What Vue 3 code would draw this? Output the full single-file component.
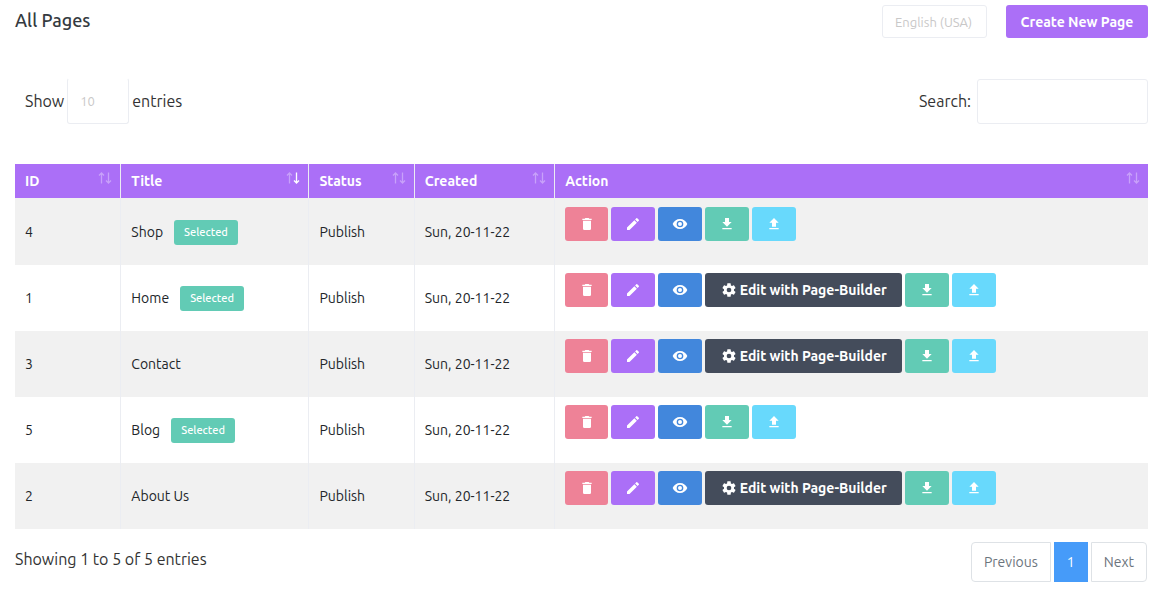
<template>
  <section class="pages">
    <header class="page-header">
      <h4>All Pages</h4>
      <div class="header-actions">
        <select v-model="language" class="field language" aria-label="Language">
          <option>English (USA)</option>
        </select>
        <button type="button" class="btn create">Create New Page</button>
      </div>
    </header>

    <div class="toolbar">
      <div class="control">
        <label for="length">Show</label>
        <select id="length" v-model="length" class="field length">
          <option>10</option>
          <option>25</option>
          <option>50</option>
        </select>
        <span>entries</span>
      </div>
      <div class="control search-control">
        <label for="search">Search:</label>
        <input id="search" v-model="search" type="search" class="field search" />
      </div>
    </div>

    <table>
      <thead>
        <tr>
          <th v-for="col in columns" :key="col.key" :class="'col-' + col.key" scope="col">
            <div class="th-inner">
              <span>{{ col.label }}</span>
              <svg class="sort" :class="{ sorted: col.key === 'title' }" viewBox="0 0 14 12" aria-hidden="true">
                <path d="M3.5 11.5V1M1 3.5L3.5 1L6 3.5" />
                <path class="down" d="M10.5 .5V11M8 8.5L10.5 11L13 8.5" />
              </svg>
            </div>
          </th>
        </tr>
      </thead>
      <tbody>
        <tr v-for="page in visiblePages" :key="page.id">
          <td>{{ page.id }}</td>
          <td>
            <div class="title">
              <span>{{ page.title }}</span>
              <span v-if="page.selected" class="badge">Selected</span>
            </div>
          </td>
          <td>{{ page.status }}</td>
          <td>{{ page.created }}</td>
          <td class="action-cell">
            <div class="actions">
              <template v-for="action in actions" :key="action.name">
                <a
                  v-if="action.name !== 'builder' || page.builder"
                  href="#"
                  class="btn"
                  :class="action.name"
                  :aria-label="action.label"
                  @click.prevent
                >
                  <svg viewBox="0 0 24 24" aria-hidden="true"><path :d="action.icon" /></svg>
                  <span v-if="action.name === 'builder'">{{ action.label }}</span>
                </a>
              </template>
            </div>
          </td>
        </tr>
      </tbody>
    </table>

    <footer class="table-footer">
      <div>Showing 1 to {{ visiblePages.length }} of {{ pages.length }} entries</div>
      <nav class="pagination" aria-label="Pagination">
        <a href="#" @click.prevent>Previous</a>
        <a href="#" class="current" aria-current="page" @click.prevent>1</a>
        <a href="#" @click.prevent>Next</a>
      </nav>
    </footer>
  </section>
</template>

<script setup>
import { ref, computed } from 'vue'

const language = ref('English (USA)')
const length = ref('10')
const search = ref('')

const columns = [
  { key: 'id', label: 'ID' },
  { key: 'title', label: 'Title' },
  { key: 'status', label: 'Status' },
  { key: 'created', label: 'Created' },
  { key: 'action', label: 'Action' }
]

const pages = [
  { id: 4, title: 'Shop', selected: true, builder: false, status: 'Publish', created: 'Sun, 20-11-22' },
  { id: 1, title: 'Home', selected: true, builder: true, status: 'Publish', created: 'Sun, 20-11-22' },
  { id: 3, title: 'Contact', selected: false, builder: true, status: 'Publish', created: 'Sun, 20-11-22' },
  { id: 5, title: 'Blog', selected: true, builder: false, status: 'Publish', created: 'Sun, 20-11-22' },
  { id: 2, title: 'About Us', selected: false, builder: true, status: 'Publish', created: 'Sun, 20-11-22' }
]

const actions = [
  {
    name: 'delete',
    label: 'Delete',
    icon: 'M6 19a2 2 0 0 0 2 2h8a2 2 0 0 0 2-2V7H6v12zM19 4h-3.5l-1-1h-5l-1 1H5v2h14V4z'
  },
  {
    name: 'edit',
    label: 'Edit',
    icon: 'M3 17.25V21h3.75L17.81 9.94l-3.75-3.75L3 17.25zM20.71 7.04a1 1 0 0 0 0-1.41l-2.34-2.34a1 1 0 0 0-1.41 0l-1.83 1.83 3.75 3.75 1.83-1.83z'
  },
  {
    name: 'view',
    label: 'View',
    icon: 'M12 4.5C7 4.5 2.73 7.61 1 12c1.73 4.39 6 7.5 11 7.5s9.27-3.11 11-7.5c-1.73-4.39-6-7.5-11-7.5zM12 17a5 5 0 1 1 0-10 5 5 0 0 1 0 10zm0-8a3 3 0 1 0 0 6 3 3 0 0 0 0-6z'
  },
  {
    name: 'builder',
    label: 'Edit with Page-Builder',
    icon: 'M12 15.5A3.5 3.5 0 0 1 8.5 12 3.5 3.5 0 0 1 12 8.5a3.5 3.5 0 0 1 3.5 3.5 3.5 3.5 0 0 1-3.5 3.5m7.43-2.53c.04-.32.07-.64.07-.97s-.03-.66-.07-1l2.11-1.63c.19-.15.24-.42.12-.64l-2-3.46c-.12-.22-.39-.31-.61-.22l-2.49 1c-.52-.39-1.06-.73-1.69-.98l-.37-2.65A.506.506 0 0 0 14 2h-4c-.25 0-.46.18-.5.42l-.37 2.65c-.63.25-1.17.59-1.69.98l-2.49-1c-.22-.09-.49 0-.61.22l-2 3.46c-.13.22-.07.49.12.64L4.57 11c-.04.34-.07.67-.07 1s.03.65.07.97l-2.11 1.66c-.19.15-.25.42-.12.64l2 3.46c.12.22.39.3.61.22l2.49-1.01c.52.4 1.06.74 1.69.99l.37 2.65c.04.24.25.42.5.42h4c.25 0 .46-.18.5-.42l.37-2.65c.63-.26 1.17-.59 1.69-.99l2.49 1.01c.22.08.49 0 .61-.22l2-3.46c.12-.22.07-.49-.12-.64l-2.11-1.66z'
  },
  { name: 'download', label: 'Download', icon: 'M19 9h-4V3H9v6H5l7 7 7-7zM5 18v2h14v-2H5z' },
  { name: 'upload', label: 'Upload', icon: 'M9 16h6v-6h4l-7-7-7 7h4v6zm-4 2h14v2H5v-2z' }
]

const visiblePages = computed(() =>
  pages
    .filter(p => p.title.toLowerCase().includes(search.value.toLowerCase()))
    .slice(0, Number(length.value))
)
</script>

<style>
body {
  margin: 0;
  background: #fff;
}
</style>

<style scoped>
* {
  box-sizing: border-box;
}

.pages {
  padding: 5px 10px 20px 15px;
  font-family: Ubuntu, 'Noto Sans', sans-serif;
  font-size: 16px;
  line-height: 24px;
  color: #333;
}

.page-header,
.header-actions,
.toolbar,
.control,
.table-footer,
.pagination {
  display: flex;
  align-items: center;
}

.page-header,
.toolbar,
.table-footer {
  justify-content: space-between;
}

.page-header {
  align-items: flex-start;
}

h4 {
  margin: 3px 0 0;
  font-size: 18px;
  font-weight: 500;
  line-height: 24px;
  color: #343a40;
}

.header-actions {
  gap: 19px;
}

.field {
  appearance: none;
  border: 1px solid #ebedf2;
  border-radius: 3px;
  background: #fff;
  font-family: inherit;
  font-size: 13px;
  color: #c9c8c8;
  outline: none;
}

.language {
  width: 105px;
  height: 33px;
  padding: 0 12px;
}

.btn {
  display: inline-flex;
  align-items: center;
  justify-content: center;
  border: 0;
  border-radius: 3px;
  font-family: inherit;
  font-size: 14px;
  font-weight: 700;
  color: #fff;
  text-decoration: none;
  white-space: nowrap;
  cursor: pointer;
}

.create {
  width: 142px;
  height: 33px;
  padding: 0;
  background: #ab6ff7;
}

.toolbar {
  margin-top: 40px;
  padding-left: 10px;
}

.control {
  gap: 3px;
}

.search-control {
  gap: 6px;
}

.length {
  width: 62px;
  height: 46px;
  padding: 0 12px;
  border-top-color: transparent;
}

.search {
  width: 171px;
  height: 45px;
  padding: 0 12px;
  color: #333;
}

table {
  width: 100%;
  margin-top: 40px;
  border-collapse: separate;
  border-spacing: 0;
  table-layout: fixed;
  font-size: 14px;
  line-height: 20px;
  color: #212529;
}

th,
td {
  padding: 0 10px;
  border-left: 1px solid #ebedf2;
  text-align: left;
}

th:first-child,
td:first-child {
  border-left: 0;
}

th {
  height: 35px;
  border-bottom: 1px solid #f1f1f1;
  background: #ab6ff7;
  font-weight: 700;
  color: #fff;
}

td {
  height: 66px;
}

tbody tr:nth-child(odd) {
  background: #f1f1f1;
}

.col-id,
.col-status {
  width: 9.3%;
}

.col-title {
  width: 16.6%;
}

.col-created {
  width: 12.4%;
}

.th-inner {
  display: flex;
  justify-content: space-between;
}

.sort {
  width: 14px;
  height: 12px;
  margin-top: 1px;
  margin-right: -2px;
  fill: none;
  stroke: #fff;
  stroke-width: 1.3;
}

.sort path {
  opacity: 0.35;
}

.sort.sorted .down {
  opacity: 1;
}

.title {
  display: flex;
  align-items: center;
  gap: 11px;
}

.badge {
  padding: 0 10px;
  border-radius: 3px;
  background: #62cbb5;
  font-size: 11px;
  font-weight: 500;
  line-height: 25px;
  color: #fff;
}

.action-cell {
  padding-top: 8px;
  vertical-align: top;
}

.actions {
  display: flex;
  gap: 3px;
}

.actions .btn {
  width: 44px;
  height: 34px;
}

.actions svg {
  width: 16px;
  height: 16px;
  fill: currentColor;
}

.actions .delete {
  width: 43px;
  background: #ee8297;
}

.actions .edit {
  background: #ab6ff7;
}

.actions .view {
  background: #4287dc;
}

.actions .builder {
  width: 197px;
  gap: 3px;
  background: #444c5b;
}

.actions .download {
  background: #62cbb5;
}

.actions .upload {
  background: #68d9fc;
}

.table-footer {
  align-items: flex-start;
  padding-right: 1px;
}

.table-footer > div {
  margin-top: 18px;
}

.pagination {
  gap: 3px;
  margin-top: 13px;
}

.pagination a {
  padding: 0 12px;
  border: 1px solid #dee2e6;
  font-size: 14px;
  line-height: 38px;
  color: #6c757d;
  text-decoration: none;
}

.pagination a:first-child {
  border-radius: 4px 0 0 4px;
}

.pagination a:last-child {
  border-radius: 0 4px 4px 0;
}

.pagination .current {
  border-color: #469bf9;
  background: #469bf9;
  color: #fff;
}
</style>
